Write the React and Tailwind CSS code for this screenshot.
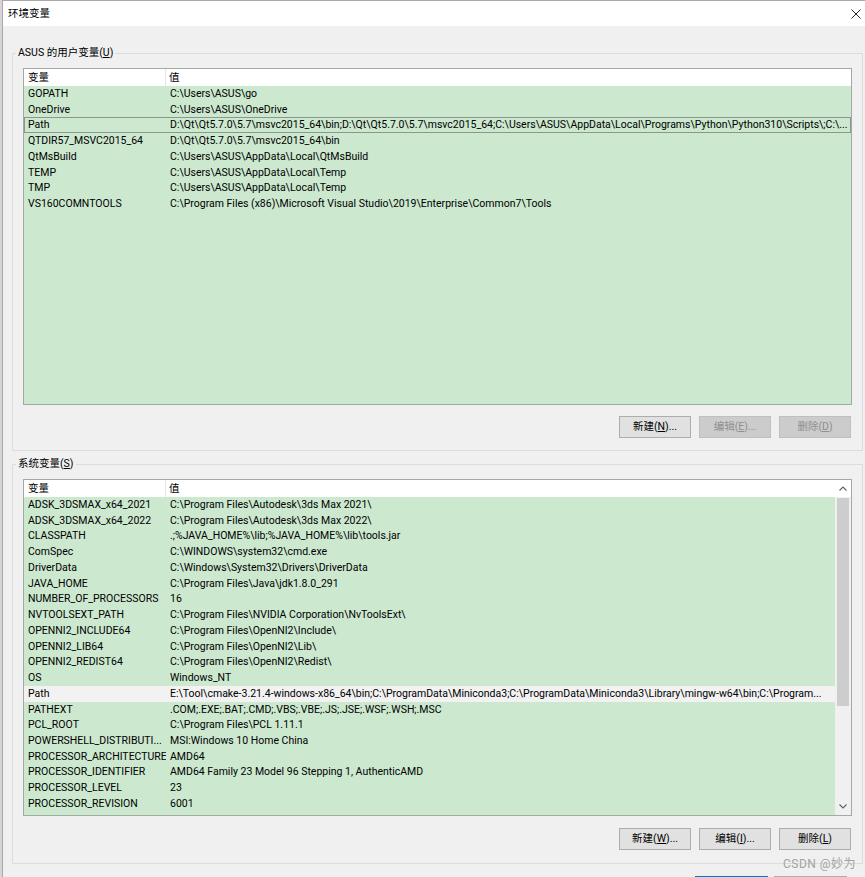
import React from "react";

// user variables of the current account
const userVars = [
  ["GOPATH", "C:\\Users\\ASUS\\go"],
  ["OneDrive", "C:\\Users\\ASUS\\OneDrive"],
  ["Path", "D:\\Qt\\Qt5.7.0\\5.7\\msvc2015_64\\bin;D:\\Qt\\Qt5.7.0\\5.7\\msvc2015_64;C:\\Users\\ASUS\\AppData\\Local\\Programs\\Python\\Python310\\Scripts\\;C:\\..."],
  ["QTDIR57_MSVC2015_64", "D:\\Qt\\Qt5.7.0\\5.7\\msvc2015_64\\bin"],
  ["QtMsBuild", "C:\\Users\\ASUS\\AppData\\Local\\QtMsBuild"],
  ["TEMP", "C:\\Users\\ASUS\\AppData\\Local\\Temp"],
  ["TMP", "C:\\Users\\ASUS\\AppData\\Local\\Temp"],
  ["VS160COMNTOOLS", "C:\\Program Files (x86)\\Microsoft Visual Studio\\2019\\Enterprise\\Common7\\Tools"],
];

// system variables
const sysVars = [
  ["ADSK_3DSMAX_x64_2021", "C:\\Program Files\\Autodesk\\3ds Max 2021\\"],
  ["ADSK_3DSMAX_x64_2022", "C:\\Program Files\\Autodesk\\3ds Max 2022\\"],
  ["CLASSPATH", ".;%JAVA_HOME%\\lib;%JAVA_HOME%\\lib\\tools.jar"],
  ["ComSpec", "C:\\WINDOWS\\system32\\cmd.exe"],
  ["DriverData", "C:\\Windows\\System32\\Drivers\\DriverData"],
  ["JAVA_HOME", "C:\\Program Files\\Java\\jdk1.8.0_291"],
  ["NUMBER_OF_PROCESSORS", "16"],
  ["NVTOOLSEXT_PATH", "C:\\Program Files\\NVIDIA Corporation\\NvToolsExt\\"],
  ["OPENNI2_INCLUDE64", "C:\\Program Files\\OpenNI2\\Include\\"],
  ["OPENNI2_LIB64", "C:\\Program Files\\OpenNI2\\Lib\\"],
  ["OPENNI2_REDIST64", "C:\\Program Files\\OpenNI2\\Redist\\"],
  ["OS", "Windows_NT"],
  ["Path", "E:\\Tool\\cmake-3.21.4-windows-x86_64\\bin;C:\\ProgramData\\Miniconda3;C:\\ProgramData\\Miniconda3\\Library\\mingw-w64\\bin;C:\\Program..."],
  ["PATHEXT", ".COM;.EXE;.BAT;.CMD;.VBS;.VBE;.JS;.JSE;.WSF;.WSH;.MSC"],
  ["PCL_ROOT", "C:\\Program Files\\PCL 1.11.1"],
  ["POWERSHELL_DISTRIBUTI...", "MSI:Windows 10 Home China"],
  ["PROCESSOR_ARCHITECTURE", "AMD64"],
  ["PROCESSOR_IDENTIFIER", "AMD64 Family 23 Model 96 Stepping 1, AuthenticAMD"],
  ["PROCESSOR_LEVEL", "23"],
  ["PROCESSOR_REVISION", "6001"],
];

const Btn = ({ label, hot, disabled, dots }) => (
  <button
    className={
      "w-[72px] h-[22px] border flex items-center justify-center " +
      (disabled
        ? "bg-[#cccccc] border-[#bfbfbf] text-[#8f8f8f]"
        : "bg-[#e1e1e1] border-[#adadad] text-black")
    }
  >
    {label}(<span className="underline">{hot}</span>){dots ? "..." : ""}
  </button>
);

const Row = ({ name, value, mode }) => {
  let cls = "flex h-[15.74px] items-center whitespace-nowrap";
  if (mode === "focus") cls += " ring-1 ring-inset ring-[#8e948f]";
  if (mode === "inactive") cls += " bg-[#f2f2f2]";
  return (
    <div className={cls}>
      <div className="w-[142px] shrink-0 pl-[4px] overflow-hidden">{name}</div>
      <div className="flex-1 pl-[4px] overflow-hidden">{value}</div>
    </div>
  );
};

const ListHeader = () => (
  <div className="flex h-[17px] bg-white items-center shrink-0">
    <div className="w-[142px] h-full flex items-center pl-[4px] border-r border-[#e5e5e5]">变量</div>
    <div className="flex-1 pl-[3px]">值</div>
  </div>
);

const Chevron = ({ down }) => (
  <svg width="8" height="5" viewBox="0 0 8 5">
    <path
      d={down ? "M0.5 0.5 L4 4 L7.5 0.5" : "M0.5 4.5 L4 1 L7.5 4.5"}
      fill="none"
      stroke="#606060"
      strokeWidth="1.1"
    />
  </svg>
);

export default function App() {
  return (
    <div
      className="relative w-[865px] h-[877px] overflow-hidden bg-[#d9d3d6] pl-[2px] text-[10.5px] text-black"
      style={{ fontFamily: 'Roboto, "Noto Sans CJK SC", sans-serif' }}
    >
      <div className="h-full border-l border-t border-[#a9a9a9] bg-[#f0f0f0] flex flex-col">
        {/* title bar */}
        <div className="h-[25px] bg-white flex items-center justify-between pl-[5px] pr-[4px] shrink-0">
          <span className="text-[10.5px]">环境变量</span>
          <svg width="10" height="10" viewBox="0 0 10 10">
            <path d="M0.5 0.5 L9.5 9.5 M9.5 0.5 L0.5 9.5" stroke="#222" strokeWidth="1" />
          </svg>
        </div>

        {/* user variables */}
        <fieldset className="ml-[9px] mt-[19px] w-[851px] border border-[#dcdcdc] px-[10px] pt-[7px] pb-[12px]">
          <legend className="-ml-[7px] px-[2px] leading-[16px]">
            ASUS 的用户变量(<span className="underline">U</span>)
          </legend>
          <div className="h-[337px] border border-[#a3aaa4] bg-[#cce8cf] flex flex-col">
            <ListHeader />
            {userVars.map(([n, v]) => (
              <Row key={n} name={n} value={v} mode={n === "Path" ? "focus" : ""} />
            ))}
          </div>
          <div className="flex justify-end gap-[8px] mt-[11px] pr-[1px]">
            <Btn label="新建" hot="N" dots />
            <Btn label="编辑" hot="E" dots disabled />
            <Btn label="删除" hot="D" disabled />
          </div>
        </fieldset>

        {/* system variables */}
        <fieldset className="ml-[9px] mt-[5px] w-[851px] border border-[#dcdcdc] px-[10px] pt-[7px] pb-[13px]">
          <legend className="-ml-[7px] px-[2px] leading-[16px]">
            系统变量(<span className="underline">S</span>)
          </legend>
          <div className="h-[337px] border border-[#a3aaa4] bg-[#cce8cf] flex">
            <div className="flex-1 flex flex-col overflow-hidden">
              <ListHeader />
              {sysVars.map(([n, v]) => (
                <Row key={n} name={n} value={v} mode={n === "Path" ? "inactive" : ""} />
              ))}
            </div>
            <div className="w-[16px] shrink-0 bg-[#f0f0f0] flex flex-col items-center">
              <div className="h-[17px] w-full bg-white flex items-center justify-center">
                <Chevron />
              </div>
              <div className="w-[12px] h-[208px] bg-[#cdcdcd] mt-[1px]" />
              <div className="flex-1" />
              <div className="h-[17px] w-full flex items-center justify-center">
                <Chevron down />
              </div>
            </div>
          </div>
          <div className="flex justify-end gap-[8px] mt-[12px] pr-[1px]">
            <Btn label="新建" hot="W" dots />
            <Btn label="编辑" hot="I" dots />
            <Btn label="删除" hot="L" />
          </div>
        </fieldset>

        {/* OK / cancel, mostly cut off */}
        <div className="flex gap-[6px] mt-[12px] ml-[692px]">
          <div className="w-[73px] h-[22px] border-2 border-[#0078d7] bg-[#e1e1e1]" />
          <div className="w-[73px] h-[22px] border border-[#adadad] bg-[#e1e1e1]" />
        </div>
      </div>

      <div className="absolute left-[783px] top-[855px] text-[12px] text-[#a3a3a3] tracking-[0.5px] whitespace-nowrap">
        CSDN @妙为
      </div>
    </div>
  );
}
